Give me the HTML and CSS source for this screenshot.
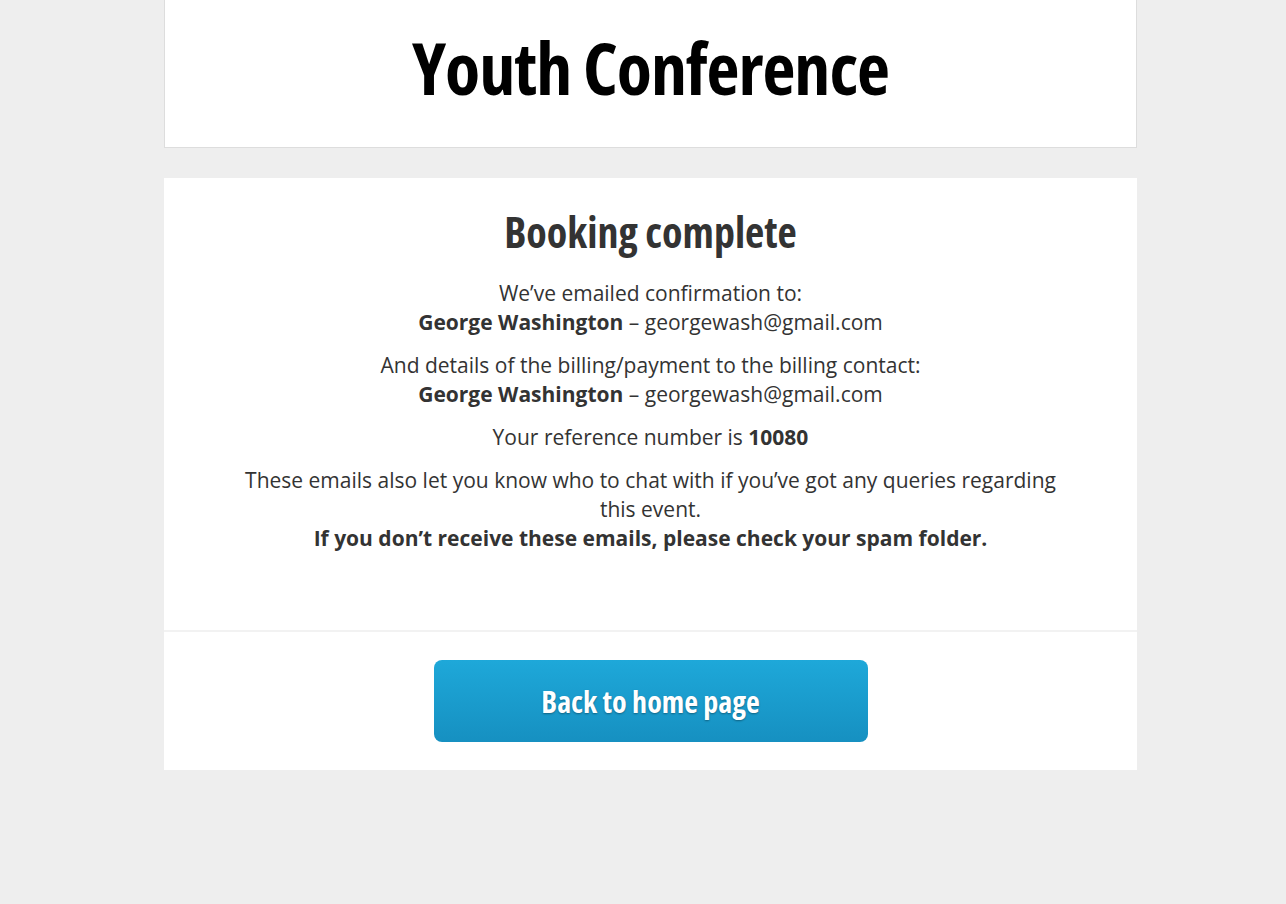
FILE: index.html
```html
<!DOCTYPE html>
<html lang="en">
<head>
  <meta charset="UTF-8">
  <title>Youth Conference - Booking complete</title>
  <meta name="viewport" content="width=device-width, initial-scale=1.0">
  <link rel="stylesheet" href="styles.css">
</head>
<body>
  <div class="page">
    <div class="event-header">
      <h1>Youth Conference</h1>
    </div>

    <div class="booking-card">
      <div class="booking-body">
        <h2>Booking complete</h2>
        <p>We&rsquo;ve emailed confirmation to:<br>
          <strong>George Washington</strong> &ndash; georgewash@gmail.com</p>
        <p>And details of the billing/payment to the billing contact:<br>
          <strong>George Washington</strong> &ndash; georgewash@gmail.com</p>
        <p>Your reference number is <strong>10080</strong></p>
        <p>These emails also let you know who to chat with if you&rsquo;ve got any queries regarding this event.<br>
          <strong>If you don&rsquo;t receive these emails, please check your spam folder.</strong></p>
      </div>
      <div class="booking-actions">
        <button class="home-button">Back to home page</button>
      </div>
    </div>
  </div>
</body>
</html>
```

FILE: styles.css
```css
* {
  box-sizing: border-box;
  margin: 0;
  padding: 0;
}

body {
  font-family: "Open Sans", "Liberation Sans", sans-serif;
  background-color: #eeeeee;
  color: #333;
  min-height: 100vh;
}

.page {
  width: 973px;
  margin-left: calc(50% - 479px);
}

.event-header {
  background-color: #fff;
  border: 1px solid #dddddd;
  border-top: none;
  height: 148px;
  display: flex;
  align-items: center;
  justify-content: center;
}

.event-header h1 {
  font-size: 72px;
  font-weight: 700;
  font-stretch: 75%;
  color: #000;
  letter-spacing: -1px;
  margin-top: -14px;
}

.booking-card {
  background-color: #fff;
  margin-top: 30px;
}

.booking-body {
  padding: 25px 70px 63px;
  text-align: center;
  border-bottom: 2px solid #f2f2f2;
}

.booking-body h2 {
  font-size: 42px;
  font-weight: 700;
  font-stretch: 75%;
  margin-bottom: 19px;
}

.booking-body p {
  font-size: 21px;
  line-height: 29px;
  margin-bottom: 14px;
}

.booking-body strong {
  font-weight: 700;
}

.booking-actions {
  display: flex;
  justify-content: center;
  padding: 28px 0 28px;
}

.home-button {
  width: 434px;
  height: 82px;
  border: none;
  border-radius: 8px;
  background: linear-gradient(#1ea8d9, #1690c1);
  color: white;
  font-family: "Open Sans", sans-serif;
  font-size: 30px;
  font-weight: 700;
  font-stretch: 75%;
  text-shadow: 0 1px 2px rgba(0,0,0,0.35);
  cursor: pointer;
}
```
